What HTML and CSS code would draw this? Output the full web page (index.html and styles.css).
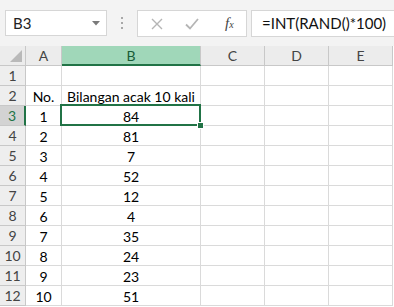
FILE: index.html
```html
<!DOCTYPE html>
<html lang="en">

<head>
    <meta charset="UTF-8">
    <title>Bilangan acak</title>
    <link rel="stylesheet" href="styles.css">
</head>

<body>
    <div class="toolbar">
        <div class="namebox">
            <span>B3</span>
            <svg class="caret" width="8" height="5" viewBox="0 0 8 5"><path d="M0 0H8L4 4.5Z" fill="#7a7a7a"/></svg>
        </div>
        <div class="dots"><i></i><i></i><i></i></div>
        <div class="fxbox">
            <svg width="12" height="12" viewBox="0 0 12 12"><path d="M1 1L11 11M11 1L1 11" stroke="#b5b5b5" stroke-width="1.4"/></svg>
            <svg width="14" height="12" viewBox="0 0 14 12"><path d="M1 6.5L5 10.5L13 1" stroke="#b5b5b5" stroke-width="1.8" fill="none"/></svg>
            <span class="fx">f<small>x</small></span>
        </div>
        <div class="formula">=INT(RAND()*100)</div>
    </div>

    <div class="sheet">
        <div class="corner"></div>
        <div class="colhead">A</div>
        <div class="colhead active">B</div>
        <div class="colhead">C</div>
        <div class="colhead">D</div>
        <div class="colhead">E</div>

        <div class="rowhead">1</div><div class="cell"></div><div class="cell"></div><div class="cell"></div><div class="cell"></div><div class="cell"></div>
        <div class="rowhead">2</div><div class="cell">No.</div><div class="cell">Bilangan acak 10 kali</div><div class="cell"></div><div class="cell"></div><div class="cell"></div>
        <div class="rowhead active">3</div><div class="cell">1</div><div class="cell selected">84</div><div class="cell"></div><div class="cell"></div><div class="cell"></div>
        <div class="rowhead">4</div><div class="cell">2</div><div class="cell">81</div><div class="cell"></div><div class="cell"></div><div class="cell"></div>
        <div class="rowhead">5</div><div class="cell">3</div><div class="cell">7</div><div class="cell"></div><div class="cell"></div><div class="cell"></div>
        <div class="rowhead">6</div><div class="cell">4</div><div class="cell">52</div><div class="cell"></div><div class="cell"></div><div class="cell"></div>
        <div class="rowhead">7</div><div class="cell">5</div><div class="cell">12</div><div class="cell"></div><div class="cell"></div><div class="cell"></div>
        <div class="rowhead">8</div><div class="cell">6</div><div class="cell">4</div><div class="cell"></div><div class="cell"></div><div class="cell"></div>
        <div class="rowhead">9</div><div class="cell">7</div><div class="cell">35</div><div class="cell"></div><div class="cell"></div><div class="cell"></div>
        <div class="rowhead">10</div><div class="cell">8</div><div class="cell">24</div><div class="cell"></div><div class="cell"></div><div class="cell"></div>
        <div class="rowhead">11</div><div class="cell">9</div><div class="cell">23</div><div class="cell"></div><div class="cell"></div><div class="cell"></div>
        <div class="rowhead">12</div><div class="cell">10</div><div class="cell">51</div><div class="cell"></div><div class="cell"></div><div class="cell"></div>
    </div>
</body>

</html>
```

FILE: styles.css
```css
body {
    margin: 0;
    background: #ffffff;
    font-family: Lato, 'Liberation Sans', sans-serif;
    font-size: 14px;
    color: #000000;
    overflow: hidden;
}

/* formula bar */
.toolbar {
    height: 46px;
    box-sizing: border-box;
    background: #f3f3f3;
    display: flex;
    align-items: flex-start;
    padding: 10px 0 0 5px;
    font-size: 15px;
}

.namebox {
    width: 102px;
    height: 26px;
    box-sizing: border-box;
    background: #ffffff;
    border: 1px solid #d6d6d6;
    display: flex;
    align-items: center;
    justify-content: space-between;
    padding: 0 6px 0 7px;
    color: #222;
}

.caret {
    margin-top: 1px;
}

.dots {
    width: 30px;
    height: 26px;
    display: flex;
    flex-direction: column;
    align-items: center;
    justify-content: center;
    gap: 3px;
}

.dots i {
    width: 2px;
    height: 2px;
    background: #a8a8a8;
}

.fxbox {
    width: 110px;
    height: 27px;
    box-sizing: border-box;
    background: #ffffff;
    border: 1px solid #d6d6d6;
    display: flex;
    align-items: center;
    padding: 0 0 0 13px;
    gap: 22px;
}

.fx {
    font-family: 'Liberation Serif', serif;
    font-style: italic;
    font-size: 15px;
    color: #444;
    margin-left: 4px;
}

.fx small {
    font-size: 10px;
}

.formula {
    flex: 1;
    height: 27px;
    box-sizing: border-box;
    margin-left: 4px;
    background: #ffffff;
    border: 1px solid #d6d6d6;
    border-right: none;
    padding: 3px 0 0 10px;
    color: #111;
}

/* grid */
.sheet {
    display: grid;
    grid-template-columns: 26px 36px 139px 64px 64px 64px;
    grid-template-rows: 20px;
    grid-auto-rows: 20px;
}

.corner,
.colhead,
.rowhead {
    background: #ececec;
    color: #444;
    box-sizing: border-box;
    border-right: 1px solid #c8c8c8;
    border-bottom: 1px solid #c8c8c8;
    display: flex;
    align-items: flex-end;
    justify-content: center;
    padding-bottom: 1px;
}

.corner {
    position: relative;
}

.corner::after {
    content: "";
    position: absolute;
    right: 3px;
    bottom: 3px;
    border-left: 12px solid transparent;
    border-bottom: 12px solid #b9b9b9;
}

.colhead.active {
    background: #a0d7b9;
    color: #185c37;
    border-bottom: 2px solid #217346;
    padding-bottom: 0;
}

.rowhead {
    background: #eeeeee;
}

.rowhead.active {
    background: #d3d3d3;
    color: #217346;
    border-right: 2px solid #217346;
}

.cell {
    box-sizing: border-box;
    border-right: 1px solid #dadada;
    border-bottom: 1px solid #dadada;
    display: flex;
    align-items: flex-end;
    justify-content: center;
    padding-bottom: 0;
    white-space: nowrap;
}

.cell.selected {
    position: relative;
}

.cell.selected::before {
    content: "";
    position: absolute;
    left: -2px;
    top: -2px;
    right: -1px;
    bottom: -1px;
    border: 2px solid #217346;
}

.cell.selected::after {
    content: "";
    position: absolute;
    right: -4px;
    bottom: -4px;
    width: 5px;
    height: 5px;
    background: #217346;
    border: 1px solid #ffffff;
}
```
